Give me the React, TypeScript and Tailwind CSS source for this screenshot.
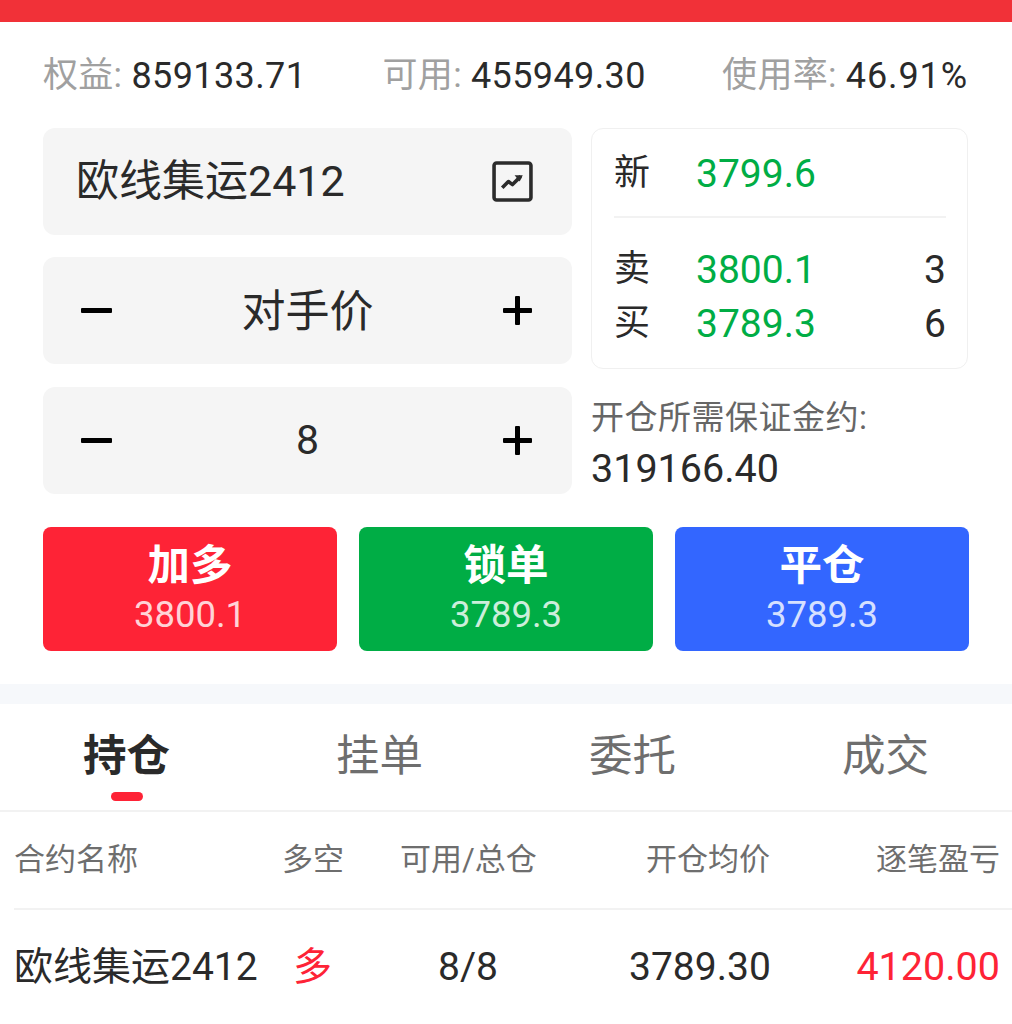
import type { ReactNode } from "react";

const FONT = "font-['Roboto','Noto_Sans_CJK_SC',sans-serif]";

const Stat = ({ label, value, wide }: { label: string; value: string; wide?: boolean }) => (
  <div className="flex items-center">
    <span className="mt-[1px] text-[35px] tracking-[.3px] text-[#a0a0a0]">{label}:</span>
    <span className={`ml-[9px] text-[36px] text-[#2a2a2a] ${wide ? "tracking-[.9px]" : "tracking-[.4px]"}`}>{value}</span>
  </div>
);

const ChartIcon = () => (
  <svg width="41" height="41" viewBox="0 0 40 40" fill="none" stroke="#2b2b2b">
    <rect x="2" y="2" width="36" height="36" rx="2.5" strokeWidth="3.5" />
    <path d="M10 26 L16 20 L20 23 L28 15" strokeWidth="3.5" strokeLinejoin="round" />
    <path d="M22 14 H30 L27 20 Z" fill="#2b2b2b" stroke="none" />
  </svg>
);

const Stepper = ({ children }: { children: ReactNode }) => (
  <div className="flex h-[107px] items-center justify-between rounded-xl bg-[#f5f5f5] pl-[38px] pr-[40px] text-[#2a2a2a]">
    <div className="h-[5px] w-[31px] rounded-[1px] bg-black" />
    <div>{children}</div>
    <div className="relative h-[29px] w-[29px]">
      <div className="absolute left-0 top-[12px] h-[5px] w-[29px] rounded-[1px] bg-black" />
      <div className="absolute left-[12px] top-0 h-[29px] w-[5px] rounded-[1px] bg-black" />
    </div>
  </div>
);

const Quote = ({ label, price, size }: { label: string; price: string; size?: string }) => (
  <div className="flex h-[54px] items-center text-[#2a2a2a]">
    <span className="w-[82px] text-[36px]">{label}</span>
    <span className="mt-[3px] text-[39px] text-[#00ad45]">{price}</span>
    <span className="ml-auto mt-[3px] text-[39px]">{size}</span>
  </div>
);

const TradeButton = ({ title, price, color, priceColor }: { title: string; price: string; color: string; priceColor: string }) => (
  <div className={`flex h-[124px] flex-col items-center justify-center rounded-lg ${color}`}>
    <span className="text-[42.5px] leading-[50px] font-bold text-white">{title}</span>
    <span className={`mt-[2px] text-[36.5px] leading-[44px] ${priceColor}`}>{price}</span>
  </div>
);

const tabs = ["持仓", "挂单", "委托", "成交"];

export default function App() {
  return (
    <div className={`h-[1024px] w-[1012px] overflow-hidden bg-white ${FONT} text-[36px]`}>
      <div className="h-[22px] bg-[#f13138]" />

      <div className="flex h-[106px] items-center justify-between pl-[43px] pr-[44px] pt-[2px]">
        <Stat label="权益" value="859133.71" />
        <Stat label="可用" value="455949.30" />
        <Stat label="使用率" value="46.91%" wide />
      </div>

      <div className="flex gap-[19px] pl-[43px] pr-[43px]">
        <div className="flex w-[529px] flex-col gap-[22px]">
          <div className="flex h-[107px] items-center justify-between rounded-xl bg-[#f5f5f5] pl-[33px] pr-[39px] text-[#2a2a2a]">
            <span className="-mt-[1px] text-[43px]">欧线集运2412</span>
            <ChartIcon />
          </div>
          <Stepper>
            <span className="mt-[2px] block text-[44px]">对手价</span>
          </Stepper>
          <div className="mt-[1px]">
            <Stepper>
              <span className="mt-[1px] block text-[41px]">8</span>
            </Stepper>
          </div>
        </div>

        <div className="flex w-[377px] flex-col">
          <div className="h-[241px] rounded-xl border border-[#f0f0f0] pl-[22px] pr-[21px]">
            <div className="flex h-[89px] items-center border-b-2 border-[#f2f2f2] text-[#2a2a2a]">
              <span className="w-[82px]">新</span>
              <span className="mt-[3px] text-[39px] text-[#00ad45]">3799.6</span>
            </div>
            <div className="pt-[24px]">
              <Quote label="卖" price="3800.1" size="3" />
              <Quote label="买" price="3789.3" size="6" />
            </div>
          </div>
          <div className="mt-[25px] text-[33px] tracking-[.5px] leading-[48px] text-[#666666]">开仓所需保证金约:</div>
          <div className="mt-[1px] text-[39.5px] leading-[52px] text-[#2a2a2a]">319166.40</div>
        </div>
      </div>

      <div className="mt-[32px] grid grid-cols-3 gap-[22px] pl-[43px] pr-[43px]">
        <TradeButton title="加多" price="3800.1" color="bg-[#fe2336]" priceColor="text-[#ffd3d7]" />
        <TradeButton title="锁单" price="3789.3" color="bg-[#00ad45]" priceColor="text-[#cceedb]" />
        <TradeButton title="平仓" price="3789.3" color="bg-[#3366ff]" priceColor="text-[#d6e0ff]" />
      </div>

      <div className="mt-[33px] h-[20px] bg-[#f6f8fb]" />

      <div className="grid h-[108px] grid-cols-4 border-b-2 border-[#f2f2f2]">
        {tabs.map((t, i) => (
          <div key={t} className="relative flex items-start justify-center pt-[26px]">
            <span className={`text-[43.5px] leading-[54px] ${i === 0 ? "font-bold text-[#2a2a2a]" : "text-[#6e6e6e]"}`}>{t}</span>
            {i === 0 && <div className="absolute top-[88px] h-[9px] w-[32px] rounded-full bg-[#fe2336]" />}
          </div>
        ))}
      </div>

      <div className="ml-[14px] flex h-[98px] items-center border-b-2 border-[#f2f2f2] pr-[12px] text-[31px] text-[#6e6e6e]">
        <span className="w-[268px]">合约名称</span>
        <span className="w-[118px]">多空</span>
        <span className="w-[246px]">可用/总仓</span>
        <span className="w-[124px]">开仓均价</span>
        <span className="ml-auto">逐笔盈亏</span>
      </div>

      <div className="ml-[14px] mr-[12px] flex h-[114px] items-center text-[39px] text-[#2a2a2a]">
        <span className="w-[281px]">欧线集运2412</span>
        <span className="w-[143px] -translate-x-[2px] text-[#fe2336]">多</span>
        <span className="w-[191px]">8/8</span>
        <span className="w-[227px]">3789.30</span>
        <span className="ml-auto text-[39.5px] text-[#fe2336]">4120.00</span>
      </div>
    </div>
  );
}
